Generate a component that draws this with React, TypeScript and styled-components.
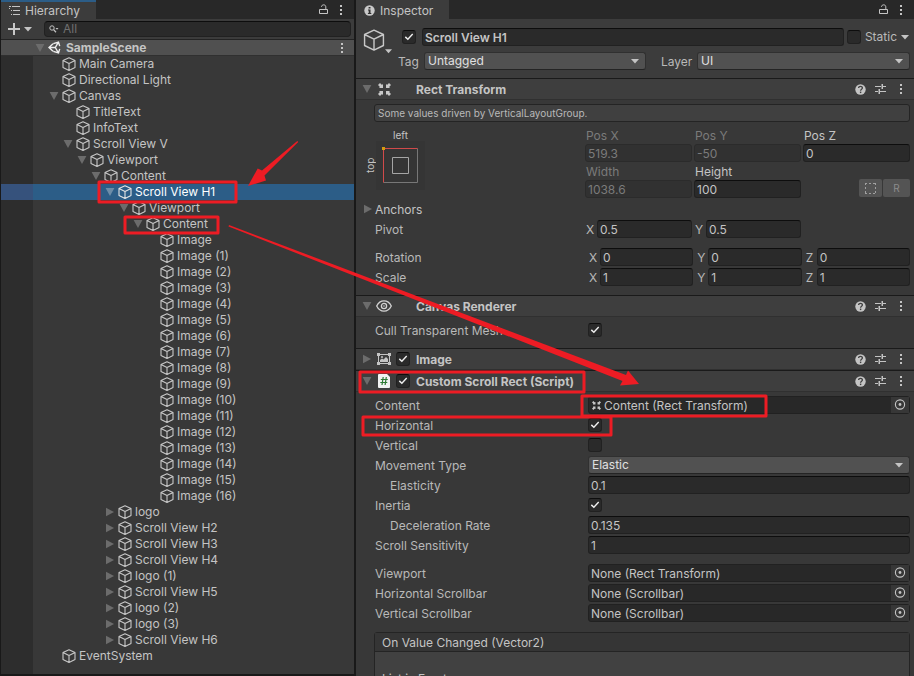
import React, { useId, useState } from "react";
import styled, { createGlobalStyle, css } from "styled-components";

const color = {
  edge: "#191919",
  tabBar: "#282828",
  toolbar: "#3c3c3c",
  panel: "#383838",
  header: "#3e3e3e",
  gutter: "#2d2d2d",
  field: "#2a2a2a",
  fieldLine: "#212121",
  fieldTop: "#0d0d0d",
  text: "#c4c4c4",
  label: "#b9b9b9",
  dim: "#7b7b7b",
  fold: "#6c6c6c",
  mark: "#ed1c24",
};

const GlobalStyle = createGlobalStyle`
  *, *::before, *::after { box-sizing: border-box; }
  body {
    margin: 0;
    background: ${color.edge};
    color: ${color.text};
    font: 12px/16px Inter, "Liberation Sans", sans-serif;
  }
  button, input, select { font: inherit; color: inherit; margin: 0; }
  button { border: 0; padding: 0; background: none; }
  ul { list-style: none; margin: 0; padding: 0; }
  h1, h2 { margin: 0; font-size: 12px; }
`;

/* ---------- Window and panels ---------- */

const Window = styled.div`
  position: relative;
  display: grid;
  grid-template-columns: minmax(0, 355fr) minmax(0, 559fr);
  height: 100vh;
  overflow: hidden;
`;

const HierarchyPanel = styled.section`
  display: flex;
  flex-direction: column;
  min-height: 0;
  margin: 0 1px 2px;
  background: ${color.panel};
`;

const InspectorPanel = styled.section`
  min-height: 0;
  margin-left: 1px;
  overflow: hidden;
  background: ${color.panel};
`;

const TabBar = styled.header`
  display: flex;
  align-items: center;
  height: 19px;
  flex: none;
  padding-right: 4px;
  background: ${color.tabBar};
`;

const Tab = styled.h1<{ $focused?: boolean }>`
  display: flex;
  align-items: center;
  gap: 5px;
  height: 19px;
  padding: 2px 16px 0 8px;
  border-top: ${(p) => (p.$focused ? `2px solid #2c5d87` : "0")};
  ${(p) => p.$focused && css`padding-top: 0;`}
  margin-right: auto;
  background: ${color.toolbar};
  font-weight: 400;
`;

const IconButton = styled.button<{ $width?: number }>`
  display: flex;
  align-items: center;
  justify-content: center;
  flex: none;
  width: ${(p) => p.$width ?? 20}px;
  height: 16px;
`;

/* ---------- Hierarchy ---------- */

const SearchBar = styled.div`
  display: flex;
  align-items: center;
  flex: none;
  height: 21px;
  padding: 0 3px 0 7px;
  border-bottom: 1px solid #232323;
  background: ${color.toolbar};
`;

const AddButton = styled.button`
  display: flex;
  align-items: center;
  gap: 4px;
  width: 36px;
`;

const SearchField = styled.label`
  display: flex;
  align-items: center;
  flex: 1;
  gap: 4px;
  height: 16px;
  min-width: 0;
  padding-left: 4px;
  border: 1px solid ${color.fieldLine};
  border-top-color: ${color.fieldTop};
  border-radius: 4px;
  background: ${color.field};
`;

const SearchInput = styled.input`
  flex: 1;
  min-width: 0;
  height: 14px;
  padding: 0;
  border: 0;
  outline: 0;
  background: transparent;
  &::placeholder { color: #707070; opacity: 1; }
`;

const Tree = styled.ul`
  flex: 1;
  background: linear-gradient(to right, ${color.gutter} 32px, transparent 32px);
`;

const TreeRow = styled.li<{ $depth: number; $selected?: boolean }>`
  display: flex;
  align-items: center;
  height: 16px;
  padding-left: ${(p) => 32 + p.$depth * 14}px;
  ${(p) =>
    p.$selected &&
    css`
      background: linear-gradient(to right, #36527c 32px, #2c5d87 32px);
      color: #fff;
    `}
`;

const SceneRow = styled.li`
  display: flex;
  align-items: center;
  height: 16px;
  padding: 0 2px 0 32px;
  border-bottom: 1px solid #303030;
  background: #505050;
  font-weight: 700;
`;

const NodeIcon = styled.span`
  display: flex;
  flex: none;
  margin-left: 1px;
`;

const TreeLabel = styled.span<{ $gap?: number }>`
  flex: 1;
  padding-left: ${(p) => p.$gap ?? 3}px;
  white-space: nowrap;
`;

const Fold = styled.button`
  display: flex;
  align-items: center;
  justify-content: center;
  flex: none;
  width: 14px;
  height: 16px;
`;

/* ---------- Inspector ---------- */

const ObjectHeader = styled.div`
  display: flex;
  height: 59px;
  padding: 9px 4px 0 7px;
  background: ${color.toolbar};
`;

const ObjectIcon = styled.button`
  display: flex;
  align-items: flex-end;
  width: 35px;
  height: 26px;
  flex: none;
`;

const ObjectCube = styled.span`
  display: flex;
  align-self: flex-start;
  padding-top: 1px;
`;

const ObjectFields = styled.div`
  display: flex;
  flex: 1;
  flex-direction: column;
  gap: 6px;
  min-width: 0;
`;

const NameRow = styled.div`
  display: flex;
  align-items: center;
  gap: 6px;
  padding: 0 1px 0 4px;
`;

const StaticToggle = styled.div`
  display: flex;
  align-items: center;
  flex: none;
  gap: 4px;
  margin-left: -3px;
  color: ${color.label};
`;

const TagRow = styled.div`
  display: flex;
  align-items: center;
`;

const TagLabel = styled.label<{ $width: number }>`
  flex: none;
  width: ${(p) => p.$width}px;
  padding-top: 1px;
  color: ${color.label};
`;

const TextField = styled.input<{ $strong?: boolean }>`
  width: 100%;
  min-width: 0;
  height: 18px;
  padding: 0 2px;
  border: 1px solid ${color.fieldLine};
  border-top-color: ${color.fieldTop};
  border-radius: 3px;
  outline: 0;
  background: ${color.field};
  font-weight: ${(p) => (p.$strong ? 600 : 400)};
  &:disabled {
    border-color: #2b2b2b;
    background: #313131;
    color: ${color.dim};
  }
`;

const Tick = styled.input.attrs({ type: "checkbox" })`
  appearance: none;
  display: flex;
  justify-content: center;
  flex: none;
  width: 14px;
  height: 14px;
  border: 1px solid ${color.fieldLine};
  border-top-color: ${color.fieldTop};
  border-radius: 3px;
  background: ${color.field};
  &:checked::before {
    content: "";
    width: 10px;
    height: 10px;
    margin-top: 1px;
    background: #eee;
    clip-path: polygon(8% 54%, 18% 43%, 38% 62%, 82% 14%, 92% 24%, 39% 83%);
  }
`;

const SelectBox = styled.div<{ $grow?: number; $after?: number }>`
  display: grid;
  grid-template-columns: minmax(0, 1fr) 14px;
  align-items: center;
  flex: ${(p) => p.$grow ?? 1} 1 0;
  min-width: 0;
  margin-right: ${(p) => p.$after ?? 0}px;
  height: 18px;
  border: 1px solid #303030;
  border-bottom-color: #242424;
  border-radius: 3px;
  background: #515151;
`;

const Select = styled.select`
  appearance: none;
  grid-area: 1 / 1 / 2 / 3;
  height: 16px;
  padding: 0 16px 1px 3px;
  border: 0;
  outline: 0;
  background: transparent;
  color: #e0e0e0;
`;

const SelectArrow = styled.span`
  display: flex;
  grid-area: 1 / 2;
  pointer-events: none;
`;

const ComponentHeader = styled.header`
  display: flex;
  align-items: center;
  height: 22px;
  padding: 0 3px 0 4px;
  border-top: 1px solid #1a1a1a;
  border-bottom: 1px solid #303030;
  background: ${color.header};
`;

const ComponentIcon = styled.span`
  display: flex;
  justify-content: center;
  flex: none;
  width: 16px;
  margin: 0 4px 0 2px;
`;

const ToggleSlot = styled.span`
  display: flex;
  flex: none;
  width: 20px;
`;

const ComponentTitle = styled.h2`
  flex: 1;
  padding-top: 2px;
  font-weight: 700;
  white-space: nowrap;
`;

const Body = styled.div`
  display: flex;
  flex-direction: column;
  gap: 2px;
  padding: 4px 4px 9px 18px;
`;

const Property = styled.div<{ $label?: number; $spaced?: boolean }>`
  display: grid;
  grid-template-columns: ${(p) => p.$label ?? 214}px minmax(0, 1fr);
  align-items: center;
  height: 18px;
  margin-top: ${(p) => (p.$spaced ? 8 : 0)}px;
`;

const PropertyLabel = styled.label<{ $indent?: boolean }>`
  padding: 2px 0 0 ${(p) => (p.$indent ? 16 : 1)}px;
  color: ${color.label};
  white-space: nowrap;
`;

const HelpBox = styled.p`
  height: 18px;
  margin: 0 0 3px;
  padding: 0 3px;
  border: 1px solid #242424;
  border-radius: 3px;
  background: #404040;
  color: ${color.label};
  font-size: 10px;
  white-space: nowrap;
`;

const RectLayout = styled.div`
  display: flex;
`;

const AnchorPreset = styled.div`
  display: grid;
  grid-template-columns: 12px 49px;
  grid-template-rows: 14px 49px;
  flex: none;
  width: 221px;
  margin-left: -10px;
  font-size: 10px;
  line-height: 16px;
`;

const AnchorTop = styled.span`
  grid-area: 1 / 2;
  text-align: center;
`;

const AnchorSide = styled.span`
  grid-area: 2 / 1;
  writing-mode: vertical-rl;
  rotate: 180deg;
  line-height: 12px;
  text-align: center;
`;

const AnchorButton = styled.button`
  display: flex;
  grid-area: 2 / 2;
`;

const RectGrid = styled.div`
  display: grid;
  flex: 1;
  grid-template-columns: repeat(3, minmax(0, 1fr));
  gap: 1px 2px;
`;

const RectCell = styled.div<{ $dim?: boolean }>`
  display: flex;
  flex-direction: column;
  color: ${(p) => (p.$dim ? color.dim : color.text)};
`;

const RectLabel = styled.label`
  height: 17px;
  line-height: 17px;
  padding-left: 1px;
`;

const ModeButtons = styled.div`
  display: flex;
  grid-column: 3;
  align-self: end;
  justify-content: flex-end;
  gap: 1px;
  height: 19px;
`;

const ModeButton = styled.button<{ $width: number }>`
  display: flex;
  align-items: center;
  justify-content: center;
  width: ${(p) => p.$width}px;
  height: 18px;
  border-radius: 2px;
  background: #545454;
  color: #8c8c8c;
  font-size: 10px;
`;

const AnchorsRow = styled.div`
  display: flex;
  align-items: center;
  height: 18px;
  margin-left: -13px;
`;

const AnchorsLabel = styled.span`
  padding-top: 2px;
`;

const Axes = styled.div<{ $gap: number }>`
  display: grid;
  grid-template-columns: repeat(3, minmax(0, 1fr));
  gap: ${(p) => p.$gap}px;
`;

const Axis = styled.label`
  display: flex;
  align-items: center;
  color: ${color.label};
`;

const AxisName = styled.span`
  flex: none;
  width: 12px;
  padding: 2px 0 0 1px;
`;

const AxisField = styled(TextField)`
  color: ${color.text};
`;

const ObjectField = styled.div`
  display: flex;
  align-items: center;
  height: 18px;
  padding-left: 2px;
  border: 1px solid ${color.fieldLine};
  border-radius: 3px;
  background: #282828;
`;

const ObjectName = styled.output`
  flex: 1;
  padding-top: 2px;
  white-space: nowrap;
`;

const RefIcon = styled.span`
  display: flex;
  width: 13px;
  padding-left: 1px;
`;

const Picker = styled.button`
  display: flex;
  align-items: center;
  justify-content: center;
  width: 18px;
  height: 16px;
  background: #373737;
`;

const EventBox = styled.div`
  height: 76px;
  margin-top: 8px;
  border: 1px solid #242424;
  border-radius: 3px;
  background: #414141;
`;

const EventTitle = styled.h2`
  height: 19px;
  padding: 2px 7px 0;
  border-bottom: 1px solid #242424;
  background: #353535;
  font-weight: 400;
`;

const EventEmpty = styled.p`
  margin: 0;
  padding: 19px 7px;
`;

const Annotations = styled.svg`
  position: absolute;
  top: 0;
  left: 0;
  pointer-events: none;
`;

/* ---------- Icons ---------- */

const FoldIcon = ({ open, tone = color.fold }: { open: boolean; tone?: string }) => (
  <svg width="10" height="10" fill={tone} aria-hidden="true">
    <path d={open ? "M.6 1h8.800L5 9z" : "M1 .8v8.400L9 5z"} />
  </svg>
);

const CubeIcon = ({ size = 14, stroke = 1.1, tone = "#c8c8c8" }) => (
  <svg width={size} height={size} viewBox="0 0 14 14" fill="none" stroke={tone} strokeWidth={stroke} strokeLinejoin="round" aria-hidden="true">
    <path d="M7 .7 13 3.5v7L7 13.4 1 10.5v-7zM1 3.5l6 3 6-3M7 6.5v6.9" />
  </svg>
);

const UnityIcon = () => (
  <svg width="13" height="13" viewBox="0 0 13 13" fill="none" stroke="#f0f0f0" strokeWidth="1.4" aria-hidden="true">
    <path d="M5 2.7 1 6.5l4 3.8M1 6.5h6.3L10.4 1.2M7.3 6.5l3.1 5.3M5.3 2.6l5.2-1.5 1.2 4M5.3 10.4l5.2 1.5 1.2-4" />
  </svg>
);

const HierarchyIcon = () => (
  <svg width="11" height="10" fill="#c4c4c4" aria-hidden="true">
    <path d="M0 0h2v1H0zM3 0h8v1H3zM2 4h1v1H2zM4 4h7v1H4zM2 8h1v1H2zM4 8h7v1H4zM0 2h1v1H0z" />
  </svg>
);

const InfoIcon = () => (
  <svg width="11" height="11" aria-hidden="true">
    <circle cx="5.5" cy="5.5" r="5.2" fill="#c9c9c9" />
    <path d="M4.6 2h1.9v1.6H4.6zM4 4.6h2.5v3.3h.8V9H3.9V7.9h.8V5.6H4z" fill="#303030" />
  </svg>
);

const LockIcon = () => (
  <svg width="9" height="11" fill="none" stroke="#c4c4c4" aria-hidden="true">
    <path d="M.5 5.5h8v4h-8zM2.5 2.8C2.5.2 6.8.2 6.8 2.8v2.7" />
  </svg>
);

const DotsIcon = () => (
  <svg width="4" height="10" fill="#c4c4c4" aria-hidden="true">
    <path d="M1 0h2v2H1zM1 4h2v2H1zM1 8h2v2H1z" />
  </svg>
);

const ArrowIcon = ({ width = 8 }) => (
  <svg width={width} height="5" viewBox="0 0 8 5" fill="#c4c4c4" aria-hidden="true">
    <path d="M0 0h8L4 4.5z" />
  </svg>
);

const PlusIcon = () => (
  <svg width="12" height="12" stroke="#c8c8c8" strokeWidth="2" aria-hidden="true">
    <path d="M6 0v12M0 6h12" />
  </svg>
);

const SearchIcon = () => (
  <svg width="10" height="8" fill="none" stroke="#c4c4c4" aria-hidden="true">
    <circle cx="3" cy="3" r="2.2" />
    <path d="m4.6 4.6 2.4 2.6" strokeWidth="1.3" />
    <path d="M6.5 3h3L8 4.7z" fill="#c4c4c4" stroke="none" />
  </svg>
);

const HelpIcon = () => (
  <svg width="12" height="11" aria-hidden="true">
    <circle cx="5.5" cy="5.5" r="5.2" fill="#c4c4c4" />
    <path d="M3.6 4.1c0-2.3 3.8-2.3 3.8 0C7.4 5.3 5.6 5.2 5.6 6.7" fill="none" stroke="#3e3e3e" strokeWidth="1.3" />
    <path d="M4.9 7.6h1.4v1.5H4.9z" fill="#3e3e3e" />
  </svg>
);

const PresetIcon = () => (
  <svg width="12" height="12" fill="#c4c4c4" aria-hidden="true">
    <path d="M0 3h6v1H0zM8 3h3v1H8zM6.500 1H8v5H6.500zM0 8h3v1H0zM5 8h6v1H5zM3.500 6H5v5H3.500z" />
  </svg>
);

const RectTransformIcon = ({ size = 13 }) => (
  <svg width={size} height={size} viewBox="0 0 13 13" fill="#c8c8c8" aria-hidden="true">
    <path d="M0 2 2 0l1.700 1.700L5 1.300V5H1.300l.4-1.300z" />
    <path d="M13 2 11 0 9.300 1.700 8 1.300V5h3.700l-.4-1.300z" />
    <path d="M0 11l2 2 1.700-1.700 1.300.4V8H1.300l.4 1.300z" />
    <path d="M13 11l-2 2-1.700-1.700-1.300.4V8h3.700l-.4 1.300z" />
  </svg>
);

const EyeIcon = () => (
  <svg width="16" height="12" fill="none" stroke="#d2d2d2" strokeWidth="1.3" aria-hidden="true">
    <path d="M.7 6C4-.8 12-.8 15.300 6 12 12.800 4 12.800.7 6z" />
    <circle cx="8" cy="6" r="2.6" />
    <circle cx="8" cy="6" r=".8" fill="#d2d2d2" stroke="none" />
  </svg>
);

const ImageIcon = () => (
  <svg width="14" height="12" fill="none" stroke="#c4c4c4" aria-hidden="true">
    <path d="M1.500 1.500h11v9h-11z" />
    <path d="M0 0h3v3H0zM11 0h3v3h-3zM0 9h3v3H0zM11 9h3v3h-3zM3 9V7l2-1.500 1.500 1L9 4l2 2v3z" fill="#c4c4c4" stroke="none" />
    <circle cx="5" cy="4" r="1" fill="#c4c4c4" stroke="none" />
  </svg>
);

const ScriptIcon = () => (
  <svg width="12" height="14" aria-hidden="true">
    <path d="M1 0h8l3 3v10q0 1-1 1H1q-1 0-1-1V1q0-1 1-1z" fill="#f2f2f2" />
    <path d="M5.200 3 4 11M8.300 3 7.100 11M2.800 5.500h7M2.300 8.500h7" fill="none" stroke="#2c7a34" strokeWidth="1.2" />
  </svg>
);

const TargetIcon = () => (
  <svg width="12" height="12" fill="none" stroke="#c4c4c4" aria-hidden="true">
    <circle cx="6" cy="5.500" r="4.600" strokeWidth="1.1" />
    <circle cx="6" cy="5.500" r="1.400" fill="#c4c4c4" stroke="none" />
  </svg>
);

const AnchorIcon = () => (
  <svg width="49" height="49" fill="none" aria-hidden="true">
    <path d="M0 0h49v49H0z" fill="#353535" />
    <path d="M41.500 7.500v34h-34" stroke="#777" />
    <path d="M7.500 41.500v-34h34" stroke="#d04a4a" />
    <path d="M16.500 16.500h16v16h-16z" stroke="#a5a5a5" />
    <path d="M6 6h3v3H6z" fill="#d39a10" />
  </svg>
);

const BlueprintIcon = () => (
  <svg width="11" height="11" fill="none" stroke="#a0a0a0" strokeDasharray="2 2" aria-hidden="true">
    <path d="M.5 0v11M10.500 0v11M0 .5h11M0 10.500h11" />
  </svg>
);

/* ---------- Data ---------- */

type Node = { name: string; depth: number; fold?: "open" | "closed"; selected?: boolean };

const images: Node[] = Array.from({ length: 17 }, (_, i) => ({
  name: i === 0 ? "Image" : `Image (${i})`,
  depth: 8,
}));

const closedNames = [
  "logo", "Scroll View H2", "Scroll View H3", "Scroll View H4", "logo (1)",
  "Scroll View H5", "logo (2)", "logo (3)", "Scroll View H6",
];

const nodes: Node[] = [
  { name: "Main Camera", depth: 1 },
  { name: "Directional Light", depth: 1 },
  { name: "Canvas", depth: 1, fold: "open" },
  { name: "TitleText", depth: 2 },
  { name: "InfoText", depth: 2 },
  { name: "Scroll View V", depth: 2, fold: "open" },
  { name: "Viewport", depth: 3, fold: "open" },
  { name: "Content", depth: 4, fold: "open" },
  { name: "Scroll View H1", depth: 5, fold: "open", selected: true },
  { name: "Viewport", depth: 6, fold: "open" },
  { name: "Content", depth: 7, fold: "open" },
  ...images,
  ...closedNames.map((name): Node => ({ name, depth: 5, fold: "closed" })),
  { name: "EventSystem", depth: 1 },
];

/* ---------- Parts ---------- */

const PanelMenu = () => (
  <>
    <IconButton $width={18} aria-label="Lock"><LockIcon /></IconButton>
    <IconButton $width={18} aria-label="Panel menu"><DotsIcon /></IconButton>
  </>
);

const Hierarchy = () => (
  <HierarchyPanel>
    <TabBar>
      <Tab $focused><HierarchyIcon />Hierarchy</Tab>
      <PanelMenu />
    </TabBar>
    <SearchBar>
      <AddButton aria-label="Create"><PlusIcon /><ArrowIcon /></AddButton>
      <SearchField>
        <SearchIcon />
        <SearchInput placeholder="All" aria-label="Search" />
      </SearchField>
    </SearchBar>
    <Tree role="tree">
      <SceneRow role="treeitem">
        <Fold aria-label="Fold SampleScene"><FoldIcon open /></Fold>
        <NodeIcon><UnityIcon /></NodeIcon>
        <TreeLabel $gap={5}>SampleScene</TreeLabel>
        <IconButton aria-label="Scene menu"><DotsIcon /></IconButton>
      </SceneRow>
      {nodes.map((n, i) => (
        <TreeRow key={i} role="treeitem" $depth={n.depth} $selected={n.selected}>
          <Fold aria-label={n.fold ? `Fold ${n.name}` : undefined} disabled={!n.fold}>
            {n.fold && <FoldIcon open={n.fold === "open"} tone={n.selected ? "#6d8da8" : undefined} />}
          </Fold>
          <NodeIcon><CubeIcon tone={n.selected ? "#e4e4e4" : undefined} /></NodeIcon>
          <TreeLabel>{n.name}</TreeLabel>
        </TreeRow>
      ))}
    </Tree>
  </HierarchyPanel>
);

const DropDown = ({ id, value, grow, after }: { id: string; value: string; grow?: number; after?: number }) => (
  <SelectBox $grow={grow} $after={after}>
    <Select id={id} defaultValue={value}><option>{value}</option></Select>
    <SelectArrow><ArrowIcon /></SelectArrow>
  </SelectBox>
);

const Header = ({ title, open, icon, toggle }: { title: string; open: boolean; icon: React.ReactNode; toggle?: boolean }) => (
  <ComponentHeader>
    <Fold aria-label={`Fold ${title}`}><FoldIcon open={open} /></Fold>
    <ComponentIcon>{icon}</ComponentIcon>
    <ToggleSlot>{toggle && <Tick defaultChecked aria-label={`${title} enabled`} />}</ToggleSlot>
    <ComponentTitle>{title}</ComponentTitle>
    <IconButton aria-label="Help"><HelpIcon /></IconButton>
    <IconButton aria-label="Presets"><PresetIcon /></IconButton>
    <IconButton aria-label="Component menu"><DotsIcon /></IconButton>
  </ComponentHeader>
);

const RectValue = ({ name, value, disabled }: { name: string; value: string; disabled?: boolean }) => {
  const id = useId();
  return (
    <RectCell $dim={disabled}>
      <RectLabel htmlFor={id}>{name}</RectLabel>
      <TextField id={id} defaultValue={value} disabled={disabled} />
    </RectCell>
  );
};

const Vector = ({ name, values, inset, spaced }: { name: string; values: string[]; inset?: boolean; spaced?: boolean }) => (
  <Property $label={inset ? 214 : 211} $spaced={spaced} role="group" aria-label={name}>
    <PropertyLabel as="span">{name}</PropertyLabel>
    <Axes $gap={inset ? 3 : 2}>
      {values.map((v, i) => (
        <Axis key={i}>
          <AxisName>{"XYZ"[i]}</AxisName>
          <AxisField defaultValue={v} />
        </Axis>
      ))}
    </Axes>
  </Property>
);

type FieldProps = {
  name: string;
  kind: "text" | "tick" | "select" | "object";
  value?: string;
  checked?: boolean;
  indent?: boolean;
  spaced?: boolean;
  icon?: boolean;
};

const Field = ({ name, kind, value = "", checked, indent, spaced, icon }: FieldProps) => {
  const id = useId();
  const [on, setOn] = useState(!!checked);
  return (
    <Property $spaced={spaced}>
      <PropertyLabel htmlFor={id} $indent={indent}>{name}</PropertyLabel>
      {kind === "text" && <TextField id={id} defaultValue={value} />}
      {kind === "tick" && <Tick id={id} checked={on} onChange={() => setOn(!on)} />}
      {kind === "select" && <DropDown id={id} value={value} />}
      {kind === "object" && (
        <ObjectField>
          {icon && <RefIcon><RectTransformIcon size={9} /></RefIcon>}
          <ObjectName id={id}>{value}</ObjectName>
          <Picker aria-label={`Pick ${name}`}><TargetIcon /></Picker>
        </ObjectField>
      )}
    </Property>
  );
};

const Inspector = () => (
  <InspectorPanel>
    <TabBar>
      <Tab><InfoIcon />Inspector</Tab>
      <PanelMenu />
    </TabBar>
    <ObjectHeader>
      <ObjectIcon aria-label="Object icon">
        <ObjectCube><CubeIcon size={22} stroke={0.9} /></ObjectCube>
        <ArrowIcon width={7} />
      </ObjectIcon>
      <ObjectFields>
        <NameRow>
          <Tick defaultChecked aria-label="Active" />
          <TextField $strong defaultValue="Scroll View H1" aria-label="Name" />
          <StaticToggle>
            <Tick id="static" />
            <label htmlFor="static">Static</label>
            <IconButton $width={8} aria-label="Static flags"><ArrowIcon /></IconButton>
          </StaticToggle>
        </NameRow>
        <TagRow>
          <TagLabel $width={26} htmlFor="tag">Tag</TagLabel>
          <DropDown id="tag" value="Untagged" grow={222} after={15} />
          <TagLabel $width={36} htmlFor="layer">Layer</TagLabel>
          <DropDown id="layer" value="UI" grow={213} />
        </TagRow>
      </ObjectFields>
    </ObjectHeader>

    <Header title="Rect Transform" open icon={<RectTransformIcon />} />
    <Body>
      <HelpBox>Some values driven by VerticalLayoutGroup.</HelpBox>
      <RectLayout>
        <AnchorPreset>
          <AnchorTop>left</AnchorTop>
          <AnchorSide>top</AnchorSide>
          <AnchorButton aria-label="Anchor presets"><AnchorIcon /></AnchorButton>
        </AnchorPreset>
        <RectGrid>
          <RectValue name="Pos X" value="519.3" disabled />
          <RectValue name="Pos Y" value="-50" disabled />
          <RectValue name="Pos Z" value="0" />
          <RectValue name="Width" value="1038.6" disabled />
          <RectValue name="Height" value="100" />
          <ModeButtons>
            <ModeButton $width={23} aria-label="Blueprint mode"><BlueprintIcon /></ModeButton>
            <ModeButton $width={27}>R</ModeButton>
          </ModeButtons>
        </RectGrid>
      </RectLayout>
      <AnchorsRow>
        <Fold aria-label="Fold Anchors"><FoldIcon open={false} /></Fold>
        <AnchorsLabel>Anchors</AnchorsLabel>
      </AnchorsRow>
      <Vector name="Pivot" values={["0.5", "0.5"]} />
      <Vector name="Rotation" values={["0", "0", "0"]} inset spaced />
      <Vector name="Scale" values={["1", "1", "1"]} inset />
    </Body>

    <Header title="Canvas Renderer" open icon={<EyeIcon />} />
    <Body>
      <Field name="Cull Transparent Mesh" kind="tick" checked />
    </Body>

    <Header title="Image" open={false} icon={<ImageIcon />} toggle />
    <Header title="Custom Scroll Rect (Script)" open icon={<ScriptIcon />} toggle />
    <Body>
      <Field name="Content" kind="object" value="Content (Rect Transform)" icon />
      <Field name="Horizontal" kind="tick" checked />
      <Field name="Vertical" kind="tick" />
      <Field name="Movement Type" kind="select" value="Elastic" />
      <Field name="Elasticity" kind="text" value="0.1" indent />
      <Field name="Inertia" kind="tick" checked />
      <Field name="Deceleration Rate" kind="text" value="0.135" indent />
      <Field name="Scroll Sensitivity" kind="text" value="1" />
      <Field name="Viewport" kind="object" value="None (Rect Transform)" spaced />
      <Field name="Horizontal Scrollbar" kind="object" value="None (Scrollbar)" />
      <Field name="Vertical Scrollbar" kind="object" value="None (Scrollbar)" />
      <EventBox>
        <EventTitle>On Value Changed (Vector2)</EventTitle>
        <EventEmpty>List is Empty</EventEmpty>
      </EventBox>
    </Body>
  </InspectorPanel>
);

export default function App() {
  return (
    <>
      <GlobalStyle />
      <Window>
        <Hierarchy />
        <Inspector />
        <Annotations width="914" height="676" aria-hidden="true">
          <g fill="none" stroke={color.mark} strokeWidth="3" strokeLinejoin="round">
            <rect x="99" y="182" width="137" height="20" />
            <rect x="125" y="217" width="93" height="16" />
            <rect x="360" y="372" width="224" height="20" />
            <rect x="363" y="417" width="248" height="18" />
            <rect x="582" y="396" width="184" height="20" />
          </g>
          <g fill={color.mark}>
            <path d="M297.300 141 262 170.500 257.700 168.500 248 186 266 180.500 264.500 175.500 298.200 142z" />
            <path d="M229 225 626 375 628 370.500 639 384 620 385.500 622.500 381 228.500 226.500z" />
          </g>
        </Annotations>
      </Window>
    </>
  );
}
